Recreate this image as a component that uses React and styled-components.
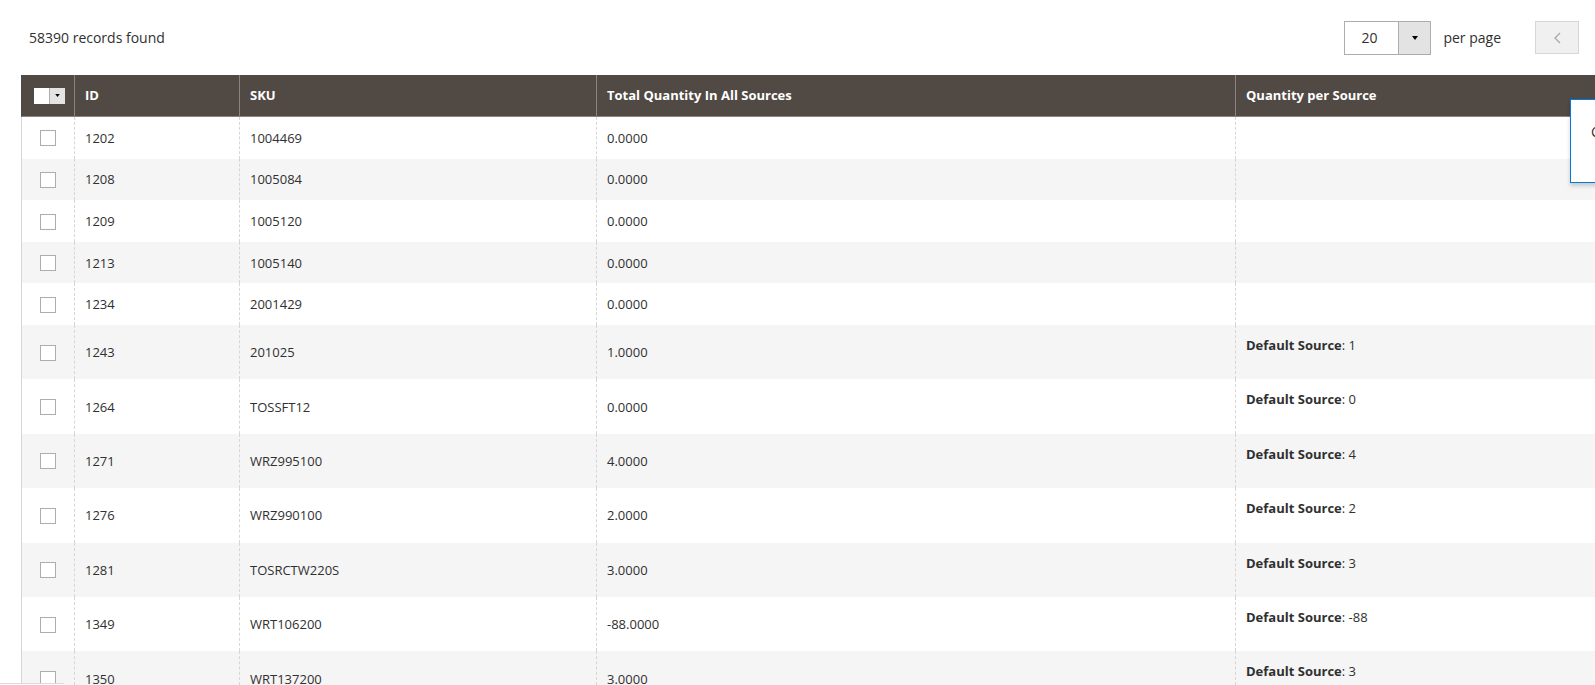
import React from "react";
import styled, { createGlobalStyle } from "styled-components";

const GlobalStyle = createGlobalStyle`
  html, body {
    margin: 0;
    padding: 0;
    overflow: hidden;
    background: #ffffff;
  }
  body {
    font-family: "Open Sans", "Liberation Sans", sans-serif;
    color: #303030;
  }
  * { box-sizing: border-box; }
`;

const Page = styled.div`
  width: 100%;
  padding: 0 16px 0 21px;
  position: relative;
`;

const Toolbar = styled.div`
  height: 75px;
  display: flex;
  align-items: center;
`;

const Records = styled.div`
  padding-left: 8px;
  font-size: 14px;
  color: #303030;
  flex: 1;
  margin-top: -1px;
`;

const Pager = styled.div`
  display: flex;
  align-items: center;
`;

const Select = styled.div`
  display: flex;
  height: 34px;
  width: 87px;
  border: 1px solid #adadad;
  background: #fff;
`;

const SelectValue = styled.div`
  flex: 1;
  display: flex;
  align-items: center;
  padding-left: 16px;
  font-size: 14px;
  color: #303030;
`;

const SelectToggle = styled.div`
  width: 32px;
  background: #e3e3e3;
  border-left: 1px solid #adadad;
  display: flex;
  align-items: center;
  justify-content: center;
`;

const PerPage = styled.span`
  font-size: 14px;
  margin-left: 12px;
  color: #303030;
`;

const PrevButton = styled.button`
  margin-left: 34px;
  width: 44px;
  height: 33px;
  background: #f0f0f0;
  border: 1px solid #d6d6d6;
  display: flex;
  align-items: center;
  justify-content: center;
  padding: 0;
`;

const TableWrap = styled.div`
  position: relative;
`;

const Grid = styled.table`
  width: 1640px;
  table-layout: fixed;
  border-collapse: separate;
  border-spacing: 0;
  font-size: 13px;
`;

const Th = styled.th`
  background: #514943;
  color: #ffffff;
  font-weight: 700;
  text-align: left;
  height: 42px;
  padding: 0 10px 2px;
  font-size: 13px;
  line-height: 18px;
  border-left: 1px solid ${(p) => (p.$first ? "#514943" : "#8a837f")};
  border-bottom: 1px solid #8a837f;
  vertical-align: middle;
`;

const Tr = styled.tr`
  background: ${(p) => (p.$striped ? "#f5f5f5" : "#ffffff")};
`;

const Td = styled.td`
  padding: 10px 10px;
  height: ${(p) => (p.$tall ? "54.4px" : "41.6px")};
  line-height: 20px;
  color: #303030;
  vertical-align: middle;
  border-left: 1px ${(p) => (p.$first ? "solid #d6d6d6" : "dashed #d6d6d6")};
  text-align: ${(p) => (p.$center ? "center" : "left")};
  white-space: nowrap;
  overflow: hidden;
`;

const Checkbox = styled.span`
  display: inline-block;
  width: 16px;
  height: 16px;
  border: 1px solid #adadad;
  background: #fff;
  vertical-align: middle;
  margin-top: -2px;
`;

const MultiSelect = styled.span`
  display: inline-flex;
  vertical-align: middle;
  height: 16px;
  margin-left: 2px;
`;

const MultiBox = styled.span`
  width: 15px;
  height: 16px;
  background: #fff;
`;

const MultiToggle = styled.span`
  width: 16px;
  height: 16px;
  background: #e3e3e3;
  border-left: 1px solid #adadad;
  display: flex;
  align-items: center;
  justify-content: center;
`;

const SourceList = styled.div`
  margin: -1px 0 13.4px;
  line-height: 20px;
`;

const SourceName = styled.strong`
  font-weight: 700;
  color: #303030;
`;

const Popup = styled.div`
  position: absolute;
  left: 1549px;
  top: 24px;
  width: 220px;
  height: 84px;
  background: #ffffff;
  border: 1px solid #007bdb;
  box-shadow: 0 3px 4px rgba(0, 0, 0, 0.18);
  padding: 22px 0 0 20px;
  font-size: 14px;
  color: #303030;
  white-space: nowrap;
`;

const BottomEdge = styled.div`
  position: fixed;
  left: 0;
  bottom: 0;
  width: 64px;
  height: 2px;
  background: #ffffff;
  border-top: 1px solid #dcdcdc;
`;

const Caret = ({ w = 6, h = 4 }) => (
  <svg width={w} height={h} viewBox="0 0 6 4">
    <path d="M0 0 L6 0 L3 4 Z" fill="#000" />
  </svg>
);

const rows = [
  [1202, "1004469", "0.0000", null],
  [1208, "1005084", "0.0000", null],
  [1209, "1005120", "0.0000", null],
  [1213, "1005140", "0.0000", null],
  [1234, "2001429", "0.0000", null],
  [1243, "201025", "1.0000", "1"],
  [1264, "TOSSFT12", "0.0000", "0"],
  [1271, "WRZ995100", "4.0000", "4"],
  [1276, "WRZ990100", "2.0000", "2"],
  [1281, "TOSRCTW220S", "3.0000", "3"],
  [1349, "WRT106200", "-88.0000", "-88"],
  [1350, "WRT137200", "3.0000", "3"],
  [1351, "WRT137300", "1.0000", "1"],
];

export default function App() {
  return (
    <>
      <GlobalStyle />
      <Page>
        <Toolbar>
          <Records>58390 records found</Records>
          <Pager>
            <Select>
              <SelectValue>20</SelectValue>
              <SelectToggle>
                <Caret />
              </SelectToggle>
            </Select>
            <PerPage>per page</PerPage>
            <PrevButton aria-label="Previous page">
              <svg width="7" height="12" viewBox="0 0 7 12">
                <path d="M6 1 L1 6 L6 11" fill="none" stroke="#a8a8a8" strokeWidth="1.3" />
              </svg>
            </PrevButton>
          </Pager>
        </Toolbar>
        <TableWrap>
          <Grid>
            <colgroup>
              <col style={{ width: 53 }} />
              <col style={{ width: 165 }} />
              <col style={{ width: 357 }} />
              <col style={{ width: 639 }} />
              <col style={{ width: 426 }} />
            </colgroup>
            <thead>
              <tr>
                <Th $first>
                  <MultiSelect>
                    <MultiBox />
                    <MultiToggle>
                      <Caret w={5} h={3} />
                    </MultiToggle>
                  </MultiSelect>
                </Th>
                <Th>ID</Th>
                <Th>SKU</Th>
                <Th>Total Quantity In All Sources</Th>
                <Th>Quantity per Source</Th>
              </tr>
            </thead>
            <tbody>
              {rows.map(([id, sku, total, src], i) => {
                const tall = src !== null;
                return (
                  <Tr key={id} $striped={i % 2 === 1}>
                    <Td $first $center $tall={tall}>
                      <Checkbox />
                    </Td>
                    <Td $tall={tall}>{id}</Td>
                    <Td $tall={tall}>{sku}</Td>
                    <Td $tall={tall}>{total}</Td>
                    <Td $tall={tall}>
                      {tall && (
                        <SourceList>
                          <SourceName>Default Source</SourceName>: {src}
                        </SourceList>
                      )}
                    </Td>
                  </Tr>
                );
              })}
            </tbody>
          </Grid>
          <Popup>Columns</Popup>
        </TableWrap>
      </Page>
      <BottomEdge />
    </>
  );
}
